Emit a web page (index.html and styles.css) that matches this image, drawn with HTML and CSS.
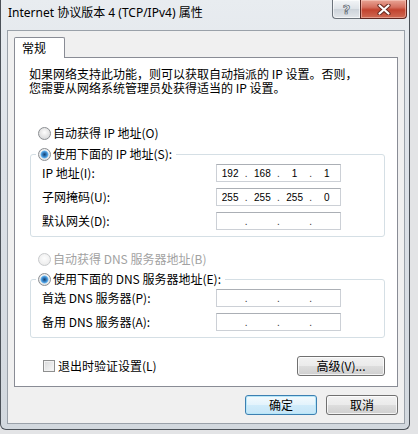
FILE: index.html
```html
<!DOCTYPE html>
<html lang="zh-CN">
<head>
<meta charset="utf-8">
<title>Internet 协议版本 4 (TCP/IPv4) 属性</title>
<link rel="stylesheet" href="styles.css">
</head>
<body>
<div class="window">
  <div class="titlebar">
    <span class="title">Internet 协议版本 4 (TCP/IPv4) 属性</span>
    <div class="caption-buttons">
      <span class="cap-btn help">?</span>
      <span class="cap-btn close">
        <svg width="14" height="11" viewBox="0 0 14 11">
          <path d="M2.5 1.5 L11.5 9.5 M11.5 1.5 L2.5 9.5" stroke="#6a2a20" stroke-width="4.2" stroke-linecap="round"/>
          <path d="M2.5 1.5 L11.5 9.5 M11.5 1.5 L2.5 9.5" stroke="#ffffff" stroke-width="2.2" stroke-linecap="round"/>
        </svg>
      </span>
    </div>
  </div>
  <div class="client">
    <div class="tabs"><span class="tab">常规</span></div>
    <div class="panel">
      <p class="intro"><span class="intro-line">如果网络支持此功能，则可以获取自动指派的 IP 设置。否则，</span><span class="intro-line">您需要从网络系统管理员处获得适当的 IP 设置。</span></p>

      <div class="option opt-first"><span class="radio"></span>自动获得 IP 地址(O)</div>

      <fieldset class="group">
        <legend><span class="option"><span class="radio checked"></span>使用下面的 IP 地址(S):</span></legend>
        <div class="rows">
          <div class="field-row">
            <span class="label">IP 地址(I):</span>
            <span class="ipbox"><span class="oct">192</span><span class="dot">.</span><span class="oct">168</span><span class="dot">.</span><span class="oct">1</span><span class="dot">.</span><span class="oct">1</span></span>
          </div>
          <div class="field-row">
            <span class="label">子网掩码(U):</span>
            <span class="ipbox"><span class="oct">255</span><span class="dot">.</span><span class="oct">255</span><span class="dot">.</span><span class="oct">255</span><span class="dot">.</span><span class="oct">0</span></span>
          </div>
          <div class="field-row">
            <span class="label">默认网关(D):</span>
            <span class="ipbox"><span class="oct"></span><span class="dot">.</span><span class="oct"></span><span class="dot">.</span><span class="oct"></span><span class="dot">.</span><span class="oct"></span></span>
          </div>
        </div>
      </fieldset>

      <div class="option opt-disabled"><span class="radio disabled"></span>自动获得 DNS 服务器地址(B)</div>

      <fieldset class="group group-dns">
        <legend><span class="option"><span class="radio checked"></span>使用下面的 DNS 服务器地址(E):</span></legend>
        <div class="rows">
          <div class="field-row">
            <span class="label">首选 DNS 服务器(P):</span>
            <span class="ipbox"><span class="oct"></span><span class="dot">.</span><span class="oct"></span><span class="dot">.</span><span class="oct"></span><span class="dot">.</span><span class="oct"></span></span>
          </div>
          <div class="field-row">
            <span class="label">备用 DNS 服务器(A):</span>
            <span class="ipbox"><span class="oct"></span><span class="dot">.</span><span class="oct"></span><span class="dot">.</span><span class="oct"></span><span class="dot">.</span><span class="oct"></span></span>
          </div>
        </div>
      </fieldset>

      <div class="bottom-row">
        <span class="option"><span class="check"></span>退出时验证设置(L)</span>
        <button type="button" class="btn btn-adv">高级(V)...</button>
      </div>
    </div>
    <div class="dialog-buttons">
      <button type="button" class="btn btn-default">确定</button>
      <button type="button" class="btn">取消</button>
    </div>
  </div>
</div>
</body>
</html>
```

FILE: styles.css
```css
* { box-sizing: border-box; }

html, body { margin: 0; padding: 0; }

body {
  width: 418px;
  height: 434px;
  overflow: hidden;
  background: #e3e4e6;
  font-family: "Noto Sans CJK SC", "Noto Sans", sans-serif;
  font-size: 12px;
  color: #000;
}

.window {
  width: 410px;
  height: 430px;
  border: 1px solid #4b5158;
  border-top: 0;
  border-radius: 0 0 6px 6px;
  background: linear-gradient(#e8ecf0, #dce1e7 40%, #d2d8de);
  display: flex;
  flex-direction: column;
}

.titlebar {
  height: 30px;
  flex: none;
  display: flex;
  align-items: flex-start;
}

.title {
  margin: 5px 0 0 7px;
  font-family: "Noto Sans", "Noto Sans CJK SC", sans-serif;
  font-size: 12px;
  line-height: 16px;
  color: #000;
}

.caption-buttons {
  margin-left: auto;
  margin-right: 2px;
  display: flex;
}

.cap-btn {
  height: 19px;
  display: flex;
  align-items: center;
  justify-content: center;
}

.help {
  width: 28px;
  border: 1px solid #6c737b;
  border-top: 0;
  border-right: 0;
  border-radius: 0 0 0 4px;
  background: linear-gradient(#f3f5f7, #dde2e7 50%, #cdd3da 52%, #e2e6ea);
  box-shadow: inset 0 0 0 1px rgba(255,255,255,0.6);
  font-family: "DejaVu Sans", sans-serif;
  font-weight: bold;
  font-size: 13px;
  color: #eef1f4;
  -webkit-text-stroke: 0.7px #59616a;
}

.close {
  width: 47px;
  border: 1px solid #5e2620;
  border-top: 0;
  border-radius: 0 0 4px 0;
  background: linear-gradient(#e9a595, #d5705f 40%, #c2432f 55%, #cf6a53);
  box-shadow: inset 0 0 0 1px rgba(255,220,210,0.45);
}

.client {
  width: 398px;
  height: 394px;
  margin-left: 6px;
  border: 1px solid #9aa1a9;
  background: #f0f0f0;
  padding: 6px 6px 0 6px;
  display: flex;
  flex-direction: column;
}

.tabs {
  height: 20px;
  display: flex;
  position: relative;
  z-index: 1;
}

.tab {
  width: 51px;
  height: 21px;
  border: 1px solid #898c95;
  border-bottom: 0;
  border-radius: 2px 2px 0 0;
  background: #fff;
  padding-left: 7px;
  line-height: 20px;
}

.panel {
  height: 330px;
  border: 1px solid #898c95;
  background: #fff;
  display: flex;
  flex-direction: column;
}

.intro {
  margin: 9px 0 0 14px;
  display: flex;
  flex-direction: column;
  white-space: nowrap;
}

.intro-line {
  display: block;
  height: 14px;
  line-height: 14px;
}

.option {
  display: flex;
  align-items: center;
  height: 16px;
  line-height: 16px;
  white-space: nowrap;
}

.opt-first {
  margin: 30px 0 0 23px;
}

.opt-disabled {
  margin: 14px 0 0 23px;
  color: #a2a2a2;
}

.radio {
  width: 13px;
  height: 13px;
  flex: none;
  margin-right: 2px;
  border-radius: 50%;
  border: 1px solid #8b8e92;
  background: radial-gradient(circle at 50% 40%, #fdfdfd 0, #e8e8e8 45%, #cdd0d3 100%);
}

.radio.checked {
  background:
    radial-gradient(circle at 50% 50%, #17456e 0, #2a6aa8 1.5px, #4d9ee0 3px, #86c6f2 3.8px, rgba(255,255,255,0) 4.3px),
    radial-gradient(circle at 50% 40%, #fdfdfd 0, #ececec 55%, #d6d8db 100%);
}

.radio.disabled {
  border-color: #c8cacc;
  background: radial-gradient(circle at 50% 40%, #fdfdfd 0, #f0f0f0 60%, #e2e3e4 100%);
}

.group {
  margin: 5px 12px 0 15px;
  padding: 0 0 6px 0;
  border: 1px solid #d5dfe5;
  border-radius: 3px;
  min-width: 0;
}

.group-dns {
  margin-top: 4px;
}

.group legend {
  margin-left: 5px;
  padding: 0 4px 0 2px;
}

.rows {
  margin-top: 2px;
  display: flex;
  flex-direction: column;
  gap: 6px;
}

.field-row {
  display: grid;
  grid-template-columns: 174px 125px;
  padding-left: 11px;
  height: 18px;
  align-items: center;
}

.label {
  white-space: nowrap;
  line-height: 18px;
}

.ipbox {
  height: 18px;
  display: flex;
  align-items: center;
  border: 1px solid #ccd0d6;
  border-top-color: #abafb5;
  background: #fff;
  font-family: "Liberation Sans", sans-serif;
  font-size: 10px;
  color: #000;
}

.oct {
  flex: 1;
  text-align: center;
}

.dot {
  width: 6px;
  text-align: center;
  color: #333;
}

.bottom-row {
  margin-top: 18px;
  padding: 0 12px 0 28px;
  display: flex;
  align-items: center;
  justify-content: space-between;
  height: 20px;
}

.check {
  width: 12px;
  height: 12px;
  flex: none;
  margin-right: 3px;
  border: 1px solid #8e8f8f;
  background: linear-gradient(135deg, #d8d9da, #f9f9f9);
  box-shadow: inset 0 0 0 1px #f2f2f2;
}

.btn {
  height: 20px;
  padding: 0;
  border: 1px solid #707070;
  border-radius: 3px;
  background: linear-gradient(#f2f2f2 0%, #ebebeb 48%, #dddddd 52%, #cfcfcf 100%);
  box-shadow: inset 0 0 0 1px rgba(255,255,255,0.75);
  font-family: "Noto Sans CJK SC", "Noto Sans", sans-serif;
  font-size: 12px;
  line-height: 18px;
  color: #000;
  text-align: center;
}

.btn-adv {
  width: 88px;
}

.dialog-buttons {
  margin-top: 8px;
  display: flex;
  justify-content: flex-end;
  gap: 9px;
}

.dialog-buttons .btn {
  width: 72px;
}

.btn-default {
  border-color: #3c7fb1;
  background: linear-gradient(#f4fafd 0%, #e3f3fc 48%, #d0ebfa 52%, #c5e5f7 100%);
  box-shadow: inset 0 0 0 1px #b6e6f8;
}
```
